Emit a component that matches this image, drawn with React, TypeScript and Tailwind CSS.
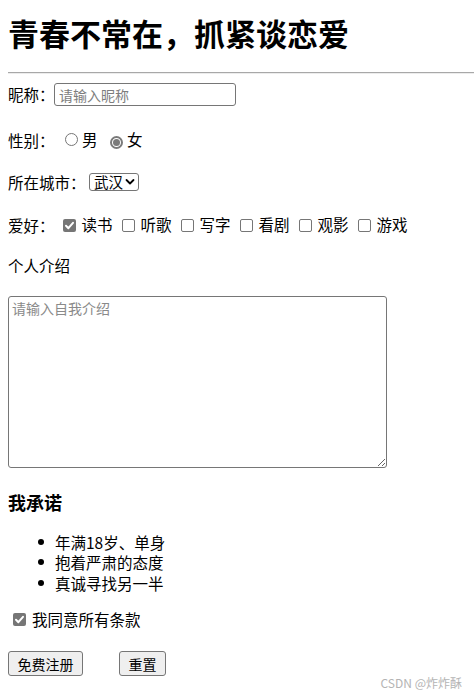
import React from "react";

function Check({ checked }: { checked?: boolean }) {
  if (checked) {
    return (
      <span className="inline-flex w-[13px] h-[13px] shrink-0 items-center justify-center rounded-[2px] bg-[#767676]">
        <svg width="11" height="11" viewBox="0 0 11 11">
          <path d="M2 5.8 L4.4 8.2 L9 2.8" stroke="#fff" strokeWidth="2" fill="none" strokeLinecap="round" strokeLinejoin="round" />
        </svg>
      </span>
    );
  }
  return <span className="inline-block w-[13px] h-[13px] shrink-0 rounded-[2px] border border-[#767676] bg-white" />;
}

function Radio({ checked }: { checked?: boolean }) {
  if (checked) {
    return (
      <span className="inline-flex w-[13px] h-[13px] shrink-0 items-center justify-center rounded-full border-2 border-[#7a7a7a] bg-white">
        <span className="w-[7px] h-[7px] rounded-full bg-[#7a7a7a]" />
      </span>
    );
  }
  return <span className="inline-block w-[13px] h-[13px] shrink-0 rounded-full border border-[#767676] bg-white" />;
}

const hobbies = [
  { t: "读书", c: true },
  { t: "听歌", c: false },
  { t: "写字", c: false },
  { t: "看剧", c: false },
  { t: "观影", c: false },
  { t: "游戏", c: false },
];

export default function App() {
  return (
    <div className="relative h-[695px] overflow-hidden bg-white pl-2 text-black font-[family-name:'Noto_Sans_CJK_SC','Noto_Sans',sans-serif] text-[15.5px]">
      <div className="flex flex-col">
        <h1 className="mt-[14px] h-[38px] leading-[38px] text-[31px] font-bold whitespace-nowrap">青春不常在，抓紧谈恋爱</h1>
        <div className="mt-[20px] -mr-2 h-[2px] border-t border-t-[#a8a8a8] border-b border-b-[#ececec]" />

        <div className="mt-[9px] flex h-[23px] items-center">
          <span className="leading-[23px]">昵称：</span>
          <input
            className="-ml-[0.5px] h-[23px] w-[182px] rounded-[3px] border border-[#767676] pl-[4px] text-[14px] outline-none placeholder:text-[#7d7d7d]"
            placeholder="请输入昵称"
          />
        </div>

        <div className="mt-[22px] flex h-[24px] items-center">
          <span className="leading-[24px]">性别：</span>
          <span className="ml-[10px]"><Radio /></span>
          <span className="ml-[4.5px]">男</span>
          <span className="ml-[12px]"><Radio checked /></span>
          <span className="ml-[4.5px]">女</span>
        </div>

        <div className="mt-[18px] flex h-[24px] items-center">
          <span className="leading-[24px]">所在城市：</span>
          <span className="ml-[3.5px] inline-flex h-[18px] w-[50px] items-center rounded-[3px] border border-[#767676] pl-[4px] text-[14.5px] leading-[16px]">
            武汉
            <svg className="ml-[2px]" width="10" height="8" viewBox="0 0 10 8">
              <path d="M1.5 2 L5 5.5 L8.5 2" stroke="#000" strokeWidth="1.8" fill="none" strokeLinecap="round" strokeLinejoin="round" />
            </svg>
          </span>
        </div>

        <div className="mt-[19px] flex h-[24px] items-center">
          <span className="leading-[24px]">爱好：</span>
          {hobbies.map((h, i) => (
            <span key={h.t} className={"flex items-center " + (i === 0 ? "ml-[8.5px]" : "ml-[9.5px]")}>
              <Check checked={h.c} />
              <span className="ml-[5.5px]">{h.t}</span>
            </span>
          ))}
        </div>

        <div className="mt-[16px] h-[24px] leading-[24px]">个人介绍</div>

        <textarea
          className="mt-[19px] h-[172px] w-[379px] rounded-[3px] border border-[#767676] px-[3px] py-[2px] text-[14px] leading-[18px] outline-none placeholder:text-[#8a8a8a]"
          placeholder="请输入自我介绍"
        />

        <h3 className="mt-[22px] h-[24px] text-[18px] font-bold leading-[24px]">我承诺</h3>

        <ul className="mt-[17.5px] flex flex-col">
          {["年满18岁、单身", "抱着严肃的态度", "真诚寻找另一半"].map((t) => (
            <li key={t} className="flex h-[20.5px] items-center leading-[20.5px]">
              <span className="ml-[30px] h-[6px] w-[6px] rounded-full bg-black" />
              <span className="ml-[11px]">{t}</span>
            </li>
          ))}
        </ul>

        <div className="mt-[14px] flex h-[24px] items-center">
          <span className="ml-[5px]"><Check checked /></span>
          <span className="ml-[6px] leading-[24px]">我同意所有条款</span>
        </div>

        <div className="mt-[20px] flex h-[25px] items-center">
          <button className="h-[25px] w-[75px] rounded-[3px] border border-[#767676] bg-[#efefef] text-[14px] leading-[20px]">免费注册</button>
          <button className="ml-[36px] h-[25px] w-[47px] rounded-[3px] border border-[#767676] bg-[#efefef] text-[14px] leading-[20px]">重置</button>
        </div>
      </div>

      <div className="absolute right-[12px] top-[675px] text-[12px] leading-[16px] text-[#b4b4b4]">CSDN @炸炸酥</div>
    </div>
  );
}
